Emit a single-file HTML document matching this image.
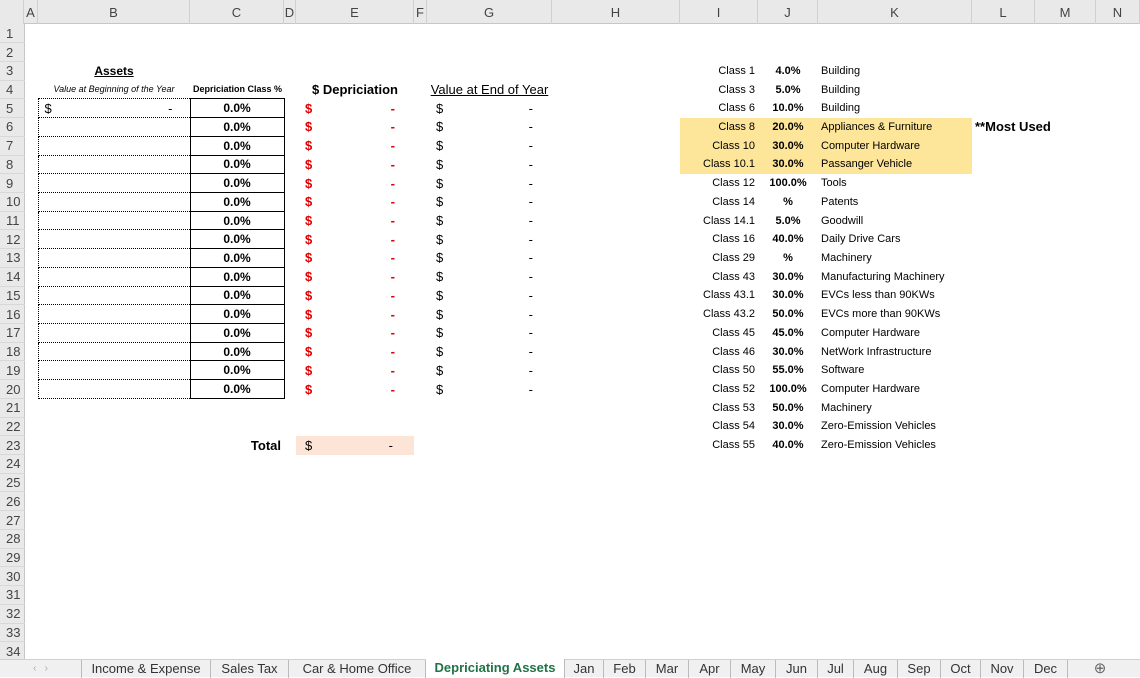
<!DOCTYPE html>
<html><head><meta charset="utf-8"><style>
*{margin:0;padding:0;box-sizing:border-box}
body{width:1140px;height:677px;overflow:hidden;background:#fff;font-family:"Liberation Sans",sans-serif;font-size:11px;color:#000;position:relative}
.hdr{position:absolute;top:0;left:0;width:1140px;height:24px;background:#e9e9e9;border-bottom:1px solid #c6c6c6}
.hdr div{position:absolute;top:0;height:24px;line-height:26px;text-align:center;font-size:13px;color:#444;border-right:1px solid #d0d0d0}
table{position:absolute;top:24px;left:0;border-collapse:collapse;table-layout:fixed;width:1140px}
td{height:18.73px;padding:0 3px;white-space:nowrap;overflow:visible;font-size:11px}
td.rh{background:#e9e9e9;color:#444;font-size:13px;text-align:left;padding-left:6px;border-right:1px solid #c6c6c6;border-bottom:1px solid #d8d8d8}
td.b{border-left:1px dotted #000;border-right:1px dotted #000;border-bottom:1px dotted #000}
td.c{border:1px solid #000;text-align:center;font-weight:bold;font-size:12px}
.r{color:#e00000;font-weight:bold}
.sp{display:flex;justify-content:space-between;padding:0 16px 0 6px}
.ri{text-align:right}
.bo{font-weight:bold}
.hl{background:#fde59a}
.tabs{position:absolute;top:659px;left:0;width:1140px;height:18px;background:#f0f0f0;border-top:1px solid #d0d0d0;font-size:13px;color:#333}
.tabs div{position:absolute;top:0;height:18px;line-height:17px;text-align:center;border-right:1px solid #bbb}
</style></head><body>
<div class="hdr">
<div style="left:0;width:24px;background:#e9e9e9"></div>
<div style="left:24px;width:14px">A</div><div style="left:38px;width:152px">B</div><div style="left:190px;width:94px">C</div><div style="left:284px;width:12px">D</div><div style="left:296px;width:118px">E</div><div style="left:414px;width:13px">F</div><div style="left:427px;width:125px">G</div><div style="left:552px;width:128px">H</div><div style="left:680px;width:78px">I</div><div style="left:758px;width:60px">J</div><div style="left:818px;width:154px">K</div><div style="left:972px;width:63px">L</div><div style="left:1035px;width:61px">M</div><div style="left:1096px;width:44px">N</div>
</div>
<table>
<colgroup><col style="width:24px"><col style="width:14px"><col style="width:152px"><col style="width:94px"><col style="width:12px"><col style="width:118px"><col style="width:13px"><col style="width:125px"><col style="width:128px"><col style="width:78px"><col style="width:60px"><col style="width:154px"><col style="width:63px"><col style="width:61px"><col style="width:44px"></colgroup>
<tr><td class="rh">1</td><td colspan="14"></td></tr>
<tr><td class="rh">2</td><td colspan="14"></td></tr>
<tr><td class="rh">3</td><td></td><td style="text-align:center;font-weight:bold;text-decoration:underline;font-size:12px">Assets</td><td colspan="6"></td><td class="ri">Class 1</td><td class="bo" style="text-align:center">4.0%</td><td>Building</td><td colspan="3"></td></tr>
<tr><td class="rh">4</td><td></td><td style="text-align:center;font-style:italic;font-size:9px">Value at Beginning of the Year</td><td style="text-align:center;font-weight:bold;font-size:9px">Depriciation Class %</td><td></td><td style="text-align:center;font-weight:bold;font-size:13px">$ Depriciation</td><td></td><td style="text-align:center;text-decoration:underline;font-size:13px">Value at End of Year</td><td></td><td class="ri">Class 3</td><td class="bo" style="text-align:center">5.0%</td><td>Building</td><td colspan="3"></td></tr>
<tr><td class="rh">5</td><td></td><td class="b" style="border-top:1px dotted #000"><div class="sp" style="font-size:13px;padding-right:14px;padding-left:3px"><span>$</span><span>-</span></div></td><td class="c">0.0%</td><td></td><td><div class="sp r" style="font-size:13px"><span>$</span><span>-</span></div></td><td></td><td><div class="sp" style="font-size:13px"><span>$</span><span>-</span></div></td><td></td><td class="ri">Class 6</td><td class="bo" style="text-align:center">10.0%</td><td>Building</td><td colspan="3"></td></tr>
<tr><td class="rh">6</td><td></td><td class="b"></td><td class="c">0.0%</td><td></td><td><div class="sp r" style="font-size:13px"><span>$</span><span>-</span></div></td><td></td><td><div class="sp" style="font-size:13px"><span>$</span><span>-</span></div></td><td></td><td class="ri hl">Class 8</td><td class="bo hl" style="text-align:center">20.0%</td><td class="hl">Appliances &amp; Furniture</td><td colspan="3" class="bo" style="font-size:13px">**Most Used</td></tr>
<tr><td class="rh">7</td><td></td><td class="b"></td><td class="c">0.0%</td><td></td><td><div class="sp r" style="font-size:13px"><span>$</span><span>-</span></div></td><td></td><td><div class="sp" style="font-size:13px"><span>$</span><span>-</span></div></td><td></td><td class="ri hl">Class 10</td><td class="bo hl" style="text-align:center">30.0%</td><td class="hl">Computer Hardware</td><td colspan="3"></td></tr>
<tr><td class="rh">8</td><td></td><td class="b"></td><td class="c">0.0%</td><td></td><td><div class="sp r" style="font-size:13px"><span>$</span><span>-</span></div></td><td></td><td><div class="sp" style="font-size:13px"><span>$</span><span>-</span></div></td><td></td><td class="ri hl">Class 10.1</td><td class="bo hl" style="text-align:center">30.0%</td><td class="hl">Passanger Vehicle</td><td colspan="3"></td></tr>
<tr><td class="rh">9</td><td></td><td class="b"></td><td class="c">0.0%</td><td></td><td><div class="sp r" style="font-size:13px"><span>$</span><span>-</span></div></td><td></td><td><div class="sp" style="font-size:13px"><span>$</span><span>-</span></div></td><td></td><td class="ri">Class 12</td><td class="bo" style="text-align:center">100.0%</td><td>Tools</td><td colspan="3"></td></tr>
<tr><td class="rh">10</td><td></td><td class="b"></td><td class="c">0.0%</td><td></td><td><div class="sp r" style="font-size:13px"><span>$</span><span>-</span></div></td><td></td><td><div class="sp" style="font-size:13px"><span>$</span><span>-</span></div></td><td></td><td class="ri">Class 14</td><td class="bo" style="text-align:center">%</td><td>Patents</td><td colspan="3"></td></tr>
<tr><td class="rh">11</td><td></td><td class="b"></td><td class="c">0.0%</td><td></td><td><div class="sp r" style="font-size:13px"><span>$</span><span>-</span></div></td><td></td><td><div class="sp" style="font-size:13px"><span>$</span><span>-</span></div></td><td></td><td class="ri">Class 14.1</td><td class="bo" style="text-align:center">5.0%</td><td>Goodwill</td><td colspan="3"></td></tr>
<tr><td class="rh">12</td><td></td><td class="b"></td><td class="c">0.0%</td><td></td><td><div class="sp r" style="font-size:13px"><span>$</span><span>-</span></div></td><td></td><td><div class="sp" style="font-size:13px"><span>$</span><span>-</span></div></td><td></td><td class="ri">Class 16</td><td class="bo" style="text-align:center">40.0%</td><td>Daily Drive Cars</td><td colspan="3"></td></tr>
<tr><td class="rh">13</td><td></td><td class="b"></td><td class="c">0.0%</td><td></td><td><div class="sp r" style="font-size:13px"><span>$</span><span>-</span></div></td><td></td><td><div class="sp" style="font-size:13px"><span>$</span><span>-</span></div></td><td></td><td class="ri">Class 29</td><td class="bo" style="text-align:center">%</td><td>Machinery</td><td colspan="3"></td></tr>
<tr><td class="rh">14</td><td></td><td class="b"></td><td class="c">0.0%</td><td></td><td><div class="sp r" style="font-size:13px"><span>$</span><span>-</span></div></td><td></td><td><div class="sp" style="font-size:13px"><span>$</span><span>-</span></div></td><td></td><td class="ri">Class 43</td><td class="bo" style="text-align:center">30.0%</td><td>Manufacturing Machinery</td><td colspan="3"></td></tr>
<tr><td class="rh">15</td><td></td><td class="b"></td><td class="c">0.0%</td><td></td><td><div class="sp r" style="font-size:13px"><span>$</span><span>-</span></div></td><td></td><td><div class="sp" style="font-size:13px"><span>$</span><span>-</span></div></td><td></td><td class="ri">Class 43.1</td><td class="bo" style="text-align:center">30.0%</td><td>EVCs less than 90KWs</td><td colspan="3"></td></tr>
<tr><td class="rh">16</td><td></td><td class="b"></td><td class="c">0.0%</td><td></td><td><div class="sp r" style="font-size:13px"><span>$</span><span>-</span></div></td><td></td><td><div class="sp" style="font-size:13px"><span>$</span><span>-</span></div></td><td></td><td class="ri">Class 43.2</td><td class="bo" style="text-align:center">50.0%</td><td>EVCs more than 90KWs</td><td colspan="3"></td></tr>
<tr><td class="rh">17</td><td></td><td class="b"></td><td class="c">0.0%</td><td></td><td><div class="sp r" style="font-size:13px"><span>$</span><span>-</span></div></td><td></td><td><div class="sp" style="font-size:13px"><span>$</span><span>-</span></div></td><td></td><td class="ri">Class 45</td><td class="bo" style="text-align:center">45.0%</td><td>Computer Hardware</td><td colspan="3"></td></tr>
<tr><td class="rh">18</td><td></td><td class="b"></td><td class="c">0.0%</td><td></td><td><div class="sp r" style="font-size:13px"><span>$</span><span>-</span></div></td><td></td><td><div class="sp" style="font-size:13px"><span>$</span><span>-</span></div></td><td></td><td class="ri">Class 46</td><td class="bo" style="text-align:center">30.0%</td><td>NetWork Infrastructure</td><td colspan="3"></td></tr>
<tr><td class="rh">19</td><td></td><td class="b"></td><td class="c">0.0%</td><td></td><td><div class="sp r" style="font-size:13px"><span>$</span><span>-</span></div></td><td></td><td><div class="sp" style="font-size:13px"><span>$</span><span>-</span></div></td><td></td><td class="ri">Class 50</td><td class="bo" style="text-align:center">55.0%</td><td>Software</td><td colspan="3"></td></tr>
<tr><td class="rh">20</td><td></td><td class="b"></td><td class="c">0.0%</td><td></td><td><div class="sp r" style="font-size:13px"><span>$</span><span>-</span></div></td><td></td><td><div class="sp" style="font-size:13px"><span>$</span><span>-</span></div></td><td></td><td class="ri">Class 52</td><td class="bo" style="text-align:center">100.0%</td><td>Computer Hardware</td><td colspan="3"></td></tr>
<tr><td class="rh">21</td><td colspan="8"></td><td class="ri">Class 53</td><td class="bo" style="text-align:center">50.0%</td><td>Machinery</td><td colspan="3"></td></tr>
<tr><td class="rh">22</td><td colspan="8"></td><td class="ri">Class 54</td><td class="bo" style="text-align:center">30.0%</td><td>Zero-Emission Vehicles</td><td colspan="3"></td></tr>
<tr><td class="rh">23</td><td></td><td></td><td class="ri bo" style="font-size:13px">Total</td><td></td><td style="background:#fce4d6"><div class="sp" style="font-size:13px;padding-right:18px"><span>$</span><span>-</span></div></td><td colspan="3"></td><td class="ri">Class 55</td><td class="bo" style="text-align:center">40.0%</td><td>Zero-Emission Vehicles</td><td colspan="3"></td></tr>
<tr><td class="rh">24</td><td colspan="14"></td></tr>
<tr><td class="rh">25</td><td colspan="14"></td></tr>
<tr><td class="rh">26</td><td colspan="14"></td></tr>
<tr><td class="rh">27</td><td colspan="14"></td></tr>
<tr><td class="rh">28</td><td colspan="14"></td></tr>
<tr><td class="rh">29</td><td colspan="14"></td></tr>
<tr><td class="rh">30</td><td colspan="14"></td></tr>
<tr><td class="rh">31</td><td colspan="14"></td></tr>
<tr><td class="rh">32</td><td colspan="14"></td></tr>
<tr><td class="rh">33</td><td colspan="14"></td></tr>
<tr><td class="rh">34</td><td colspan="14"></td></tr>
</table>
<div class="tabs">
<div style="left:0;width:82px;border-right:1px solid #bbb;color:#aaa;font-size:10px">&#8249; &nbsp; &#8250;</div>
<div style="left:82px;width:129px">Income &amp; Expense</div>
<div style="left:211px;width:78px">Sales Tax</div>
<div style="left:289px;width:137px">Car &amp; Home Office</div>
<div style="left:426px;width:139px;background:#fff;color:#217346;font-weight:bold;top:-1px;height:19px">Depriciating Assets</div>
<div style="left:565px;width:39px">Jan</div>
<div style="left:604px;width:42px">Feb</div>
<div style="left:646px;width:43px">Mar</div>
<div style="left:689px;width:42px">Apr</div>
<div style="left:731px;width:45px">May</div>
<div style="left:776px;width:42px">Jun</div>
<div style="left:818px;width:36px">Jul</div>
<div style="left:854px;width:44px">Aug</div>
<div style="left:898px;width:43px">Sep</div>
<div style="left:941px;width:40px">Oct</div>
<div style="left:981px;width:43px">Nov</div>
<div style="left:1024px;width:44px">Dec</div>
<div style="left:1088px;width:24px;border:none;font-size:15px;color:#666">&#8853;</div>
</div>
</body></html>
